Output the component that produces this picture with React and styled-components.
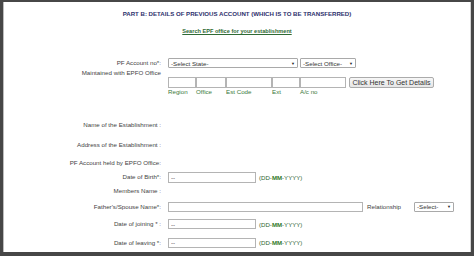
import React from "react"
import styled, { createGlobalStyle } from "styled-components"

const GlobalStyle = createGlobalStyle`
  html, body {
    margin: 0;
    padding: 0;
    background: #fff;
  }
  body {
    font-family: "Liberation Sans", Arial, sans-serif;
  }
`

const segments = [
  { label: "Region", width: 28 },
  { label: "Office", width: 30 },
  { label: "Est Code", width: 46 },
  { label: "Ext", width: 28 },
  { label: "A/c no", width: 46 },
]

const App = () => {
  return (
    <>
      <GlobalStyle />
      <Frame>
        <Panel>
          <Header>
            <Title>PART B: DETAILS OF PREVIOUS ACCOUNT (WHICH IS TO BE TRANSFERRED)</Title>
            <SearchLink href="#">Search EPF office for your establishment</SearchLink>
          </Header>

          <PfBlock>
            <Label>
              <div>PF Account no*:</div>
              <div>Maintained with EPFO Office</div>
            </Label>
            <div>
              <SelectRow>
                <SelectBox width={130}>
                  <span>-Select State-</span>
                  <Arrow>▼</Arrow>
                </SelectBox>
                <SelectBox width={56}>
                  <span>-Select Office-</span>
                  <Arrow>▼</Arrow>
                </SelectBox>
              </SelectRow>
              <SegmentRow>
                {segments.map(s => (
                  <Segment key={s.label}>
                    <TextInput width={s.width} height={11} readOnly defaultValue="" />
                    <SubLabel>{s.label}</SubLabel>
                  </Segment>
                ))}
                <DetailsButton>Click Here To Get Details</DetailsButton>
              </SegmentRow>
            </div>
          </PfBlock>

          <Row height={20}>
            <Label>Name of the Establishment :</Label>
            <div />
          </Row>
          <Row height={19}>
            <Label>Address of the Establishment :</Label>
            <div />
          </Row>
          <Row height={17}>
            <Label>PF Account held by EPFO Office:</Label>
            <div />
          </Row>
          <Row height={12}>
            <Label>Date of Birth*:</Label>
            <Field>
              <TextInput width={88} height={11} readOnly defaultValue="--" />
              <DateHint>(DD-<b>MM</b>-YYYY)</DateHint>
            </Field>
          </Row>
          <Row height={15}>
            <Label>Members Name :</Label>
            <div />
          </Row>
          <Row height={17}>
            <Label>Father's/Spouse Name*:</Label>
            <Field>
              <TextInput width={195} height={10} readOnly defaultValue="" />
              <RelLabel>Relationship</RelLabel>
              <SelectBox width={40}>
                <span>-Select-</span>
                <Arrow>▼</Arrow>
              </SelectBox>
            </Field>
          </Row>
          <Row height={18}>
            <Label>Date of joining * :</Label>
            <Field>
              <TextInput width={88} height={10} readOnly defaultValue="--" />
              <DateHint>(DD-<b>MM</b>-YYYY)</DateHint>
            </Field>
          </Row>
          <Row height={19}>
            <Label>Date of leaving *:</Label>
            <Field>
              <TextInput width={88} height={10} readOnly defaultValue="--" />
              <DateHint>(DD-<b>MM</b>-YYYY)</DateHint>
            </Field>
          </Row>
        </Panel>
      </Frame>
    </>
  )
}

const Frame = styled.div`
  width: 474px;
  height: 256px;
  box-sizing: border-box;
  background: #474747;
  padding: 2px 3px 4px 3px;
`

const Panel = styled.div`
  height: 100%;
  box-sizing: border-box;
  background: #fff;
  border-left: 1px solid #bdbdbd;
  border-right: 1px solid #d4d4d4;
  overflow: hidden;
`

const Header = styled.div`
  text-align: center;
  padding-top: 7px;
`

const Title = styled.div`
  font-size: 6.1px;
  line-height: 10px;
  font-weight: bold;
  color: #2d2f6c;
`

const SearchLink = styled.a`
  display: inline-block;
  margin-top: 6px;
  font-size: 5.6px;
  line-height: 10px;
  font-weight: bold;
  color: #2f6a34;
  text-decoration: underline;
`

const PfBlock = styled.div`
  display: grid;
  grid-template-columns: 157px 1fr;
  column-gap: 7px;
  margin-top: 21px;
  height: 38px;
  margin-bottom: 19px;
`

const Row = styled.div`
  display: grid;
  grid-template-columns: 157px 1fr;
  column-gap: 7px;
  align-items: center;
  height: ${p => p.height}px;
`

const Label = styled.div`
  text-align: right;
  font-size: 6.2px;
  line-height: 10px;
  color: #444;
`

const Field = styled.div`
  display: flex;
  align-items: center;
`

const SelectRow = styled.div`
  display: flex;
  gap: 2px;
  height: 10px;
`

const SelectBox = styled.div`
  width: ${p => p.width}px;
  height: 10px;
  box-sizing: border-box;
  border: 1px solid #a9a9a9;
  border-radius: 1px;
  padding: 0 2px;
  display: flex;
  align-items: center;
  justify-content: space-between;
  font-size: 6.2px;
  color: #333;
  background: #fff;
  white-space: nowrap;
`

const Arrow = styled.span`
  font-size: 4px;
  color: #222;
`

const SegmentRow = styled.div`
  display: flex;
  align-items: flex-start;
  margin-top: 9px;
`

const Segment = styled.div`
  display: flex;
  flex-direction: column;
`

const TextInput = styled.input`
  width: ${p => p.width}px;
  height: ${p => p.height}px;
  box-sizing: border-box;
  margin: 0;
  padding: 0 2px;
  border: 1px solid #b4b4b4;
  font-family: "Liberation Sans", Arial, sans-serif;
  font-size: 6.2px;
  color: #333;
  outline: none;
`

const SubLabel = styled.span`
  font-size: 6.2px;
  line-height: 7px;
  color: #3b7a3b;
`

const DetailsButton = styled.button`
  margin: 0 0 0 3px;
  height: 11px;
  width: 85px;
  padding: 0;
  box-sizing: border-box;
  border: 1px solid #ababab;
  border-radius: 2px;
  background: linear-gradient(#f7f7f7, #e6e6e6);
  font-family: "Liberation Sans", Arial, sans-serif;
  font-size: 7px;
  line-height: 9px;
  color: #333;
`

const DateHint = styled.span`
  margin-left: 3px;
  font-size: 6.1px;
  color: #2f5f2f;
  b {
    color: #2f7a1f;
  }
`

const RelLabel = styled.span`
  width: 47px;
  margin-left: 4px;
  font-size: 6.2px;
  color: #444;
`

export default App
